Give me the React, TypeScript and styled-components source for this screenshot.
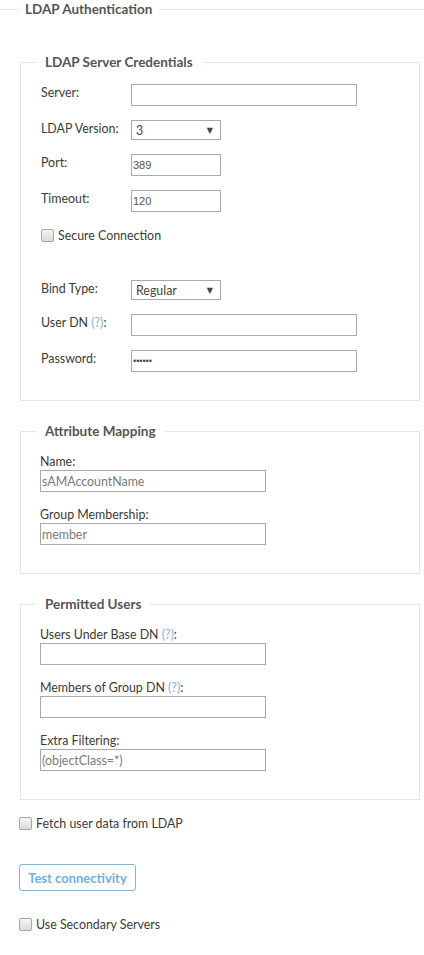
import { createGlobalStyle, styled } from "styled-components";

const GlobalStyle = createGlobalStyle`
  html, body {
    margin: 0;
    padding: 0;
    background: #ffffff;
  }
  body {
    font-family: Lato, "Liberation Sans", sans-serif;
    font-size: 12.4px;
    color: #3a3a3a;
  }
`;

const Outer = styled.fieldset`
  margin: 0;
  padding: 0 0 40px 0;
  border: none;
  border-top: 1px solid #e6e6e6;
  min-width: 0;
`;

const OuterLegend = styled.legend`
  margin-left: 18px;
  padding: 0 7px;
  font-size: 13.5px;
  font-weight: 700;
  line-height: 18px;
  color: #555555;
`;

const Body = styled.div`
  padding: 0 4px 0 20px;
`;

const Group = styled.fieldset<{ $top: number }>`
  margin: ${(p) => p.$top}px 0 0 0;
  padding: 13px 19px 28px 19px;
  border: 1px solid #e6e6e6;
  min-width: 0;
`;

const GroupLegend = styled.legend`
  margin-left: -4px;
  padding: 0 9px;
  font-size: 13.5px;
  font-weight: 700;
  line-height: 18px;
  color: #555555;
`;

const Row = styled.div<{ $gap?: number }>`
  display: flex;
  align-items: flex-start;
  margin-top: ${(p) => p.$gap ?? 14}px;
  &:first-of-type {
    margin-top: 0;
  }
`;

const RowLabel = styled.label`
  width: 90px;
  padding-left: 1px;
  flex: none;
  line-height: 18px;
`;

const Field = styled.div`
  display: flex;
  flex-direction: column;
  & + & {
    margin-top: 14px;
  }
`;

const FieldLabel = styled.label`
  line-height: 17px;
`;

const Help = styled.span`
  color: #7fb2da;
`;

const TextInput = styled.input<{ $w: number; $mono?: boolean }>`
  box-sizing: border-box;
  width: ${(p) => p.$w}px;
  height: 22px;
  margin: 0;
  padding: 0 1px;
  border: 1px solid #a9a9a9;
  border-radius: 0;
  background: #ffffff;
  font-family: ${(p) =>
    p.$mono ? '"Liberation Sans", Arial, sans-serif' : 'Lato, "Liberation Sans", sans-serif'};
  font-size: ${(p) => (p.$mono ? "11px" : "12.4px")};
  color: ${(p) => (p.$mono ? "#555555" : "#7a7a7a")};
  outline: none;
`;

const PasswordInput = styled.input`
  box-sizing: border-box;
  width: 226px;
  height: 22px;
  margin: 0;
  padding: 0 1px;
  border: 1px solid #a9a9a9;
  background: #ffffff;
  font-family: "Liberation Sans", Arial, sans-serif;
  font-size: 9px;
  color: #444444;
  outline: none;
`;

const SelectBox = styled.div`
  box-sizing: border-box;
  width: 90px;
  height: 20px;
  border: 1px solid #a9a9a9;
  background: #ffffff;
  padding: 0 0 0 4px;
  display: flex;
  align-items: center;
  justify-content: space-between;
  color: #444444;
`;

const Caret = styled.span`
  font-size: 8px;
  color: #444444;
  margin-right: 7px;
  font-family: "DejaVu Sans", sans-serif;
`;

const CheckRow = styled.label<{ $top: number; $indent?: number }>`
  display: flex;
  align-items: center;
  gap: 4px;
  height: 18px;
  margin-top: ${(p) => p.$top}px;
  margin-left: ${(p) => p.$indent ?? 0}px;
`;

const Check = styled.input`
  appearance: none;
  box-sizing: border-box;
  width: 13px;
  height: 13px;
  margin: 0;
  border: 1px solid #a6a6a6;
  border-radius: 2px;
  background: linear-gradient(#f4f4f4, #dcdcdc);
  flex: none;
`;

const OutlineButton = styled.button`
  box-sizing: border-box;
  display: block;
  width: 117px;
  height: 27px;
  margin: 32px 0 0 -1px;
  padding: 0;
  border: 1px solid #6bbfe0;
  border-radius: 3px;
  background: #ffffff;
  font-family: Lato, "Liberation Sans", sans-serif;
  font-size: 13px;
  font-weight: 700;
  color: #6cb3dc;
`;

export default function App() {
  return (
    <>
      <GlobalStyle />
      <Outer>
        <OuterLegend>LDAP Authentication</OuterLegend>
        <Body>
          <Group $top={35}>
            <GroupLegend>LDAP Server Credentials</GroupLegend>
            <Row>
              <RowLabel>Server:</RowLabel>
              <TextInput $w={226} defaultValue="" />
            </Row>
            <Row>
              <RowLabel>LDAP Version:</RowLabel>
              <SelectBox>
                <span>3</span>
                <Caret>▼</Caret>
              </SelectBox>
            </Row>
            <Row>
              <RowLabel>Port:</RowLabel>
              <TextInput $w={90} $mono defaultValue="389" />
            </Row>
            <Row>
              <RowLabel>Timeout:</RowLabel>
              <TextInput $w={90} $mono defaultValue="120" />
            </Row>
            <CheckRow $top={14} $indent={1}>
              <Check type="checkbox" />
              Secure Connection
            </CheckRow>
            <Row $gap={36}>
              <RowLabel>Bind Type:</RowLabel>
              <SelectBox>
                <span>Regular</span>
                <Caret>▼</Caret>
              </SelectBox>
            </Row>
            <Row>
              <RowLabel>
                User DN <Help>(?)</Help>:
              </RowLabel>
              <TextInput $w={226} defaultValue="" />
            </Row>
            <Row>
              <RowLabel>Password:</RowLabel>
              <PasswordInput type="password" defaultValue="secret" />
            </Row>
          </Group>

          <Group $top={21}>
            <GroupLegend>Attribute Mapping</GroupLegend>
            <Field>
              <FieldLabel>Name:</FieldLabel>
              <TextInput $w={226} defaultValue="sAMAccountName" />
            </Field>
            <Field>
              <FieldLabel>Group Membership:</FieldLabel>
              <TextInput $w={226} defaultValue="member" />
            </Field>
          </Group>

          <Group $top={21}>
            <GroupLegend>Permitted Users</GroupLegend>
            <Field>
              <FieldLabel>
                Users Under Base DN <Help>(?)</Help>:
              </FieldLabel>
              <TextInput $w={226} defaultValue="" />
            </Field>
            <Field>
              <FieldLabel>
                Members of Group DN <Help>(?)</Help>:
              </FieldLabel>
              <TextInput $w={226} defaultValue="" />
            </Field>
            <Field>
              <FieldLabel>Extra Filtering:</FieldLabel>
              <TextInput $w={226} defaultValue="(objectClass=*)" />
            </Field>
          </Group>

          <CheckRow $top={14} $indent={-1}>
            <Check type="checkbox" />
            Fetch user data from LDAP
          </CheckRow>

          <OutlineButton type="button">Test connectivity</OutlineButton>

          <CheckRow $top={24} $indent={-1}>
            <Check type="checkbox" />
            Use Secondary Servers
          </CheckRow>
        </Body>
      </Outer>
    </>
  );
}
